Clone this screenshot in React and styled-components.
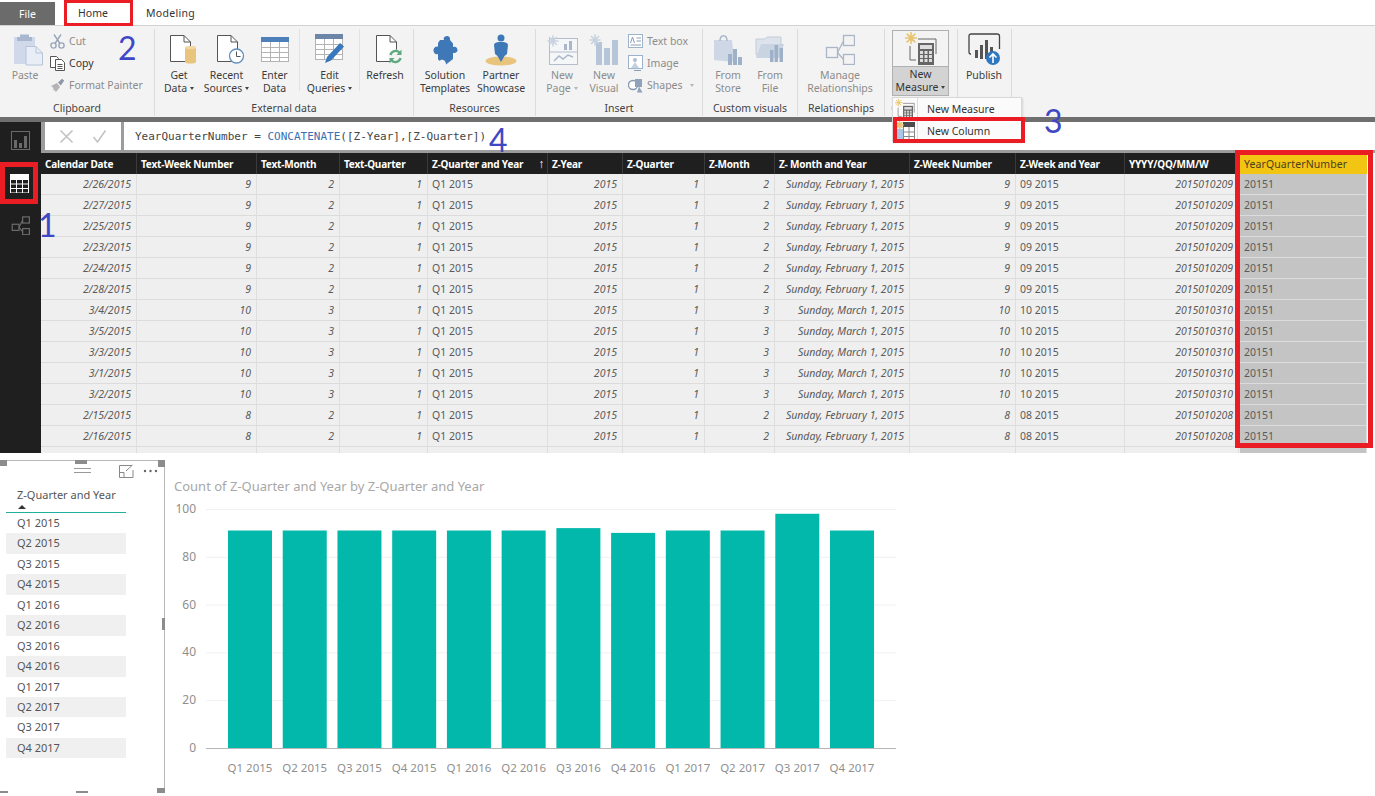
import React from "react";
import styled, { createGlobalStyle } from "styled-components";

const UI = `"Noto Sans", "Open Sans", sans-serif`;

const Global = createGlobalStyle`
  html, body { margin: 0; padding: 0; background: #fff; }
  body { font-family: ${UI}; width: 1375px; height: 796px; overflow: hidden; }
`;

const Page = styled.div`
  position: relative;
  width: 1375px;
  height: 796px;
  display: flex;
  flex-direction: column;
  overflow: hidden;
  background: #fff;
`;

/* ---------- tabs ---------- */
const TabBar = styled.div`
  height: 25px;
  display: flex;
  align-items: flex-end;
  border-bottom: 1px solid #d2d2d2;
  flex: none;
`;
const FileTab = styled.div`
  width: 55px;
  height: 23px;
  background: #6b6b6b;
  color: #fff;
  font-size: 10.5px;
  display: flex;
  align-items: center;
  justify-content: center;
`;
const HomeTab = styled.div`
  width: 69px;
  height: 26px;
  margin: 0 0 -1px 9px;
  box-sizing: border-box;
  border: 3px solid #ea1c24;
  color: #333;
  font-size: 10.5px;
  padding-left: 11px;
  display: flex;
  align-items: center;
`;
const PlainTab = styled.div`
  height: 25px;
  margin-left: 13px;
  color: #333;
  font-size: 10.5px;
  display: flex;
  align-items: center;
  letter-spacing: 0.3px;
`;

/* ---------- ribbon ---------- */
const Ribbon = styled.div`
  position: relative;
  height: 91px;
  flex: none;
  display: flex;
  background: #f3f3f3;
`;
const Group = styled.div`
  width: ${(p) => p.$w}px;
  box-sizing: border-box;
  border-right: 1px solid #dcdcdc;
  margin: 3px 0 1px;
  display: flex;
  flex-direction: column;
  overflow: hidden;
`;
const GroupBody = styled.div`
  height: 71px;
  flex: none;
  display: flex;
`;
const GroupTitle = styled.div`
  height: 16px;
  font-size: 10.5px;
  color: #444;
  text-align: center;
  line-height: 16px;
  white-space: nowrap;
`;
const Big = styled.div`
  width: ${(p) => p.$w}px;
  flex: none;
  display: flex;
  flex-direction: column;
  align-items: center;
  box-sizing: border-box;
  color: ${(p) => (p.$off ? "#8c8c8c" : "#3c3c3c")};
  border-right: ${(p) => (p.$sep ? "1px solid #e2e2e2" : "none")};
  margin-bottom: ${(p) => (p.$sep ? 9 : 0)}px;
`;
const IconSlot = styled.div`
  height: 33px;
  margin: 4px 0 3px ${(p) => p.$shift || 0}px;
  display: flex;
  align-items: center;
  justify-content: center;
  flex: none;
`;
const Label = styled.div`
  font-size: 10.5px;
  line-height: 13px;
  text-align: center;
  white-space: nowrap;
  letter-spacing: -0.05px;
`;
const Caret = styled.span`
  display: inline-block;
  width: 0;
  height: 0;
  margin-left: 3px;
  vertical-align: 2px;
  border-left: 2.5px solid transparent;
  border-right: 2.5px solid transparent;
  border-top: 3px solid ${(p) => (p.$off ? "#b5b5b5" : "#444")};
`;
const SmallCol = styled.div`
  display: flex;
  flex-direction: column;
  margin-left: ${(p) => p.$ml || 0}px;
  padding-top: 1px;
`;
const Small = styled.div`
  height: 22px;
  display: flex;
  align-items: center;
  gap: 4px;
  font-size: 10.5px;
  white-space: nowrap;
  color: ${(p) => (p.$off ? "#8c8c8c" : "#333")};
`;
const MeasureButton = styled.div`
  width: 57px;
  height: 66px;
  margin: 1px 0 0 7px;
  box-sizing: border-box;
  border: 1px solid #b0b0b0;
  display: flex;
  flex-direction: column;
  align-items: center;
  color: #333;
`;
const MeasureIcon = styled.div`
  height: 35px;
  flex: none;
  display: flex;
  align-items: center;
`;
const MeasureLabel = styled.div`
  flex: 1;
  width: 100%;
  background: #d3d3d3;
  border-top: 1px solid #b0b0b0;
  font-size: 10.5px;
  line-height: 13px;
  text-align: center;
  white-space: nowrap;
  padding-top: 1px;
`;

/* ---------- dropdown ---------- */
const Menu = styled.div`
  position: absolute;
  left: 892px;
  top: 71px;
  width: 130px;
  height: 45px;
  background: #fbfbfb;
  border: 1px solid #d8d8d8;
  box-sizing: border-box;
  z-index: 3;
  box-shadow: 1px 1px 2px rgba(0, 0, 0, 0.12);
`;
const MenuItem = styled.div`
  height: 22px;
  display: flex;
  align-items: center;
  font-size: 10.5px;
  color: #333;
`;
const MenuIcon = styled.div`
  width: 25px;
  height: 100%;
  flex: none;
  box-sizing: border-box;
  border-right: 1px solid #dedede;
  margin-right: 9px;
  display: flex;
  align-items: center;
  justify-content: center;
`;

/* ---------- main ---------- */
const GreyBar = styled.div`
  height: 5px;
  flex: none;
  background: #6f6f6f;
`;
const Main = styled.div`
  position: relative;
  height: 331px;
  flex: none;
  display: flex;
  overflow: hidden;
`;
const Side = styled.div`
  width: 41px;
  flex: none;
  background: #1f1f1f;
  display: flex;
  flex-direction: column;
  box-sizing: border-box;
`;
const SideButton = styled.div`
  width: ${(p) => (p.$active ? 38 : 41)}px;
  height: ${(p) => p.$h}px;
  margin-bottom: ${(p) => p.$mb || 0}px;
  flex: none;
  box-sizing: border-box;
  border: ${(p) => (p.$active ? "5px solid #ea1c24" : "none")};
  display: flex;
  align-items: center;
  justify-content: center;
`;
const Work = styled.div`
  flex: 1;
  min-width: 0;
  display: flex;
  flex-direction: column;
`;
const FormulaBar = styled.div`
  height: 31px;
  flex: none;
  box-sizing: border-box;
  background: #9c9c9c;
  padding: 0 0 3px 4px;
  display: flex;
  gap: 3px;
`;
const FormulaButtons = styled.div`
  width: 76px;
  background: #fff;
  display: flex;
  align-items: center;
  justify-content: space-around;
  padding: 0 5px;
  box-sizing: border-box;
`;
const FormulaInput = styled.div`
  flex: 1;
  background: #fff;
  display: flex;
  align-items: center;
  padding-left: 11px;
  font-family: "DejaVu Sans Mono", "Liberation Mono", monospace;
  font-size: 11px;
  color: #444;
  white-space: pre;
`;
const Fn = styled.span`
  color: #3b6fb0;
`;

const COLS = "96px 120px 83px 88px 120px 75px 82px 70px 135px 106px 109px 114px 1px 127px 1fr";
const Row = styled.div`
  display: grid;
  grid-template-columns: ${COLS};
  height: 21px;
  flex: none;
`;
const Head = styled.div`
  background: ${(p) => (p.$hl ? "#f2c512" : "#1f1f1f")};
  color: ${(p) => (p.$hl ? "#4c4020" : "#fff")};
  font-weight: ${(p) => (p.$hl ? 400 : 700)};
  font-size: ${(p) => (p.$hl ? 10.5 : 10)}px;
  letter-spacing: ${(p) => (p.$hl ? 0.1 : -0.2)}px;
  line-height: 22px;
  padding-left: 4px;
  white-space: nowrap;
  overflow: hidden;
  box-sizing: border-box;
  border-right: ${(p) => (p.$hl ? "none" : "1px solid #3a3a3a")};
  display: flex;
  justify-content: space-between;
`;
const SortArrow = styled.span`
  margin-right: 3px;
  font-weight: 400;
  font-size: 12px;
`;
const Cell = styled.div`
  background: ${(p) => (p.$hl ? "#c4c4c4" : "#efefef")};
  color: #5a5a5a;
  font-size: 10.5px;
  font-style: ${(p) => (p.$num ? "italic" : "normal")};
  text-align: ${(p) => (p.$num ? "right" : "left")};
  padding: 0 ${(p) => (p.$num ? 5 : 0)}px 0 ${(p) => (p.$num ? 0 : 4)}px;
  line-height: 20px;
  box-sizing: border-box;
  border-bottom: 1px solid #dcdcdc;
  border-right: 1px solid #dedede;
  white-space: nowrap;
  overflow: hidden;
`;
const Gap = styled.div`
  background: #efefef;
`;
const Blank = styled.div`
  background: #fff;
`;
const Red = styled.div`
  position: absolute;
  left: ${(p) => p.$x}px;
  top: ${(p) => p.$y}px;
  width: ${(p) => p.$w}px;
  height: ${(p) => p.$h}px;
  box-sizing: border-box;
  border: ${(p) => p.$b}px solid #ea1c24;
  pointer-events: none;
  z-index: 4;
`;
const Note = styled.div`
  position: absolute;
  left: ${(p) => p.$x}px;
  top: ${(p) => p.$y}px;
  color: #3f48c4;
  font-family: "Lato", "Noto Sans", sans-serif;
  font-size: 32px;
  line-height: 32px;
  z-index: 5;
`;

/* ---------- lower ---------- */
const Lower = styled.div`
  flex: 1;
  min-height: 0;
  display: flex;
`;
const Slicer = styled.div`
  position: relative;
  width: 165px;
  height: 333px;
  margin-top: 7px;
  box-sizing: border-box;
  border-top: 1px solid #b8b8b8;
  border-right: 1px solid #b8b8b8;
  flex: none;
  padding-left: 6px;
`;
const Handle = styled.div`
  position: absolute;
  background: #8c8c8c;
  left: ${(p) => p.$x}px;
  top: ${(p) => p.$y}px;
  width: ${(p) => p.$w}px;
  height: ${(p) => p.$h}px;
`;
const SlicerBar = styled.div`
  height: 18px;
  display: flex;
  align-items: center;
  padding-top: 2px;
  position: relative;
`;
const SlicerHeader = styled.div`
  width: 120px;
  height: 32px;
  box-sizing: border-box;
  border-bottom: 1px solid #1fb0a2;
  font-size: 11px;
  color: #555;
  padding: 7px 0 0 11px;
  line-height: 14px;
  position: relative;
`;
const SortMark = styled.span`
  position: absolute;
  left: 12px;
  top: 24px;
  width: 0;
  height: 0;
  border-left: 4px solid transparent;
  border-right: 4px solid transparent;
  border-bottom: 4px solid #333;
`;
const SlicerRow = styled.div`
  width: 120px;
  height: 20.45px;
  box-sizing: border-box;
  background: ${(p) => (p.$alt ? "#f0f0f0" : "#fff")};
  font-size: 11px;
  color: #555;
  line-height: 20.45px;
  padding-left: 11px;
`;
const ChartSvg = styled.svg`
  flex: 1;
  display: block;
  width: 1210px;
  height: 343px;
`;

/* ---------- icons ---------- */
const Svg = ({ w, h, children }) => (
  <svg width={w} height={h} viewBox={`0 0 ${w} ${h}`}>{children}</svg>
);
const Sheet = ({ x = 0, y = 0, w = 21, h = 27, c = "#555", f = "#fff" }) => (
  <g>
    <path d={`M${x + 0.5} ${y + 0.5}H${x + w - 7}L${x + w - 0.5} ${y + 7}V${y + h - 0.5}H${x + 0.5}Z`} fill={f} stroke={c} />
    <path d={`M${x + w - 7} ${y + 0.5}V${y + 7}H${x + w - 0.5}`} fill="none" stroke={c} />
  </g>
);
const Burst = ({ x, y, r = 5, c = "#e9c46f" }) => (
  <g stroke={c} strokeWidth="1.6" strokeLinecap="round">
    <path d={`M${x - r} ${y}H${x + r}M${x} ${y - r}V${y + r}M${x - r * 0.7} ${y - r * 0.7}L${x + r * 0.7} ${y + r * 0.7}M${x - r * 0.7} ${y + r * 0.7}L${x + r * 0.7} ${y - r * 0.7}`} />
  </g>
);
const PasteIcon = () => (
  <Svg w={30} h={33}>
    <rect x="1" y="4" width="21" height="27" fill="#cfd9e9" />
    <path d="M7 4V1.5H16V4H19V8H4V4Z" fill="#a8b7cf" />
    <path d="M13 13.5H23L29.5 20V32H13Z" fill="#e9eef6" stroke="#b7c4d8" />
    <path d="M23 13.5V20H29.5" fill="none" stroke="#b7c4d8" />
  </Svg>
);
const CutIcon = () => (
  <Svg w={15} h={15}>
    <g fill="none" stroke="#99a6ba" strokeWidth="1.4">
      <circle cx="3.5" cy="11.5" r="2.6" />
      <circle cx="11.5" cy="11.5" r="2.6" />
      <path d="M5 9.5L11 .5M10 9.5L4 .5" />
    </g>
  </Svg>
);
const CopyIcon = () => (
  <Svg w={15} h={15}>
    <g fill="#fff" stroke="#555">
      <path d="M.5 .5H6.5L8.5 2.5V11.5H.5Z" />
      <path d="M5.5 3.5H11.5L14.5 6.5V14.5H5.5Z" />
      <path d="M7.5 8.5H12.5M7.5 10.5H12.5M7.5 12.5H12.5" />
    </g>
  </Svg>
);
const BrushIcon = () => (
  <Svg w={15} h={15}>
    <path d="M1 8L7 5L10 9L6 14C5 13 4.5 12.5 4 11.5L3 12.5L3.5 10L1 8Z" fill="#b4b4b4" />
    <path d="M8 4.5L12 .8L14.2 2.6L10.8 7.5Z" fill="#8d97a8" />
  </Svg>
);
const GetDataIcon = () => (
  <Svg w={28} h={31}>
    <Sheet x={1} y={1} w={21} h={27} />
    <path d="M16 13.5C16 11.8 27 11.8 27 13.5V28C27 30 16 30 16 28Z" fill="#e8c47d" />
    <ellipse cx="21.5" cy="13.5" rx="5.5" ry="1.6" fill="#f1d9a6" />
  </Svg>
);
const RecentIcon = () => (
  <Svg w={29} h={31}>
    <Sheet x={1} y={1} w={21} h={27} />
    <circle cx="20.5" cy="22" r="7" fill="#fff" stroke="#5f8fc0" strokeWidth="1.3" />
    <path d="M20.5 17.5V22.5H24.5" fill="none" stroke="#555" />
  </Svg>
);
const GridIcon = ({ w = 28, h = 25, top = "#4d7fb8", line = "#b3b3b3" }) => (
  <Svg w={w} h={h}>
    <rect x=".5" y=".5" width={w - 1} height={h - 1} fill="#fff" stroke={line} />
    <rect x="0" y="0" width={w} height={h * 0.2} fill={top} />
    {[0.4, 0.6, 0.8].map((f) => (
      <path key={f} d={`M0 ${Math.round(h * f) + 0.5}H${w}`} stroke={line} />
    ))}
    {[0.33, 0.66].map((f) => (
      <path key={f} d={`M${Math.round(w * f) + 0.5} ${h * 0.2}V${h}`} stroke={line} />
    ))}
  </Svg>
);
const EditIcon = () => (
  <Svg w={30} h={31}>
    <rect x=".5" y=".5" width="27" height="25" fill="#fff" stroke="#b3b3b3" />
    <rect x="0" y="0" width="28" height="5" fill="#6d85a6" />
    <path d="M0 10.5H28M0 15.5H28M0 20.5H28M9.5 5V26M18.5 5V26" stroke="#b3b3b3" />
    <path d="M10 29L12 23L25 9L29 12.5L16 26.5Z" fill="#3a78bd" />
  </Svg>
);
const RefreshIcon = () => (
  <Svg w={28} h={31}>
    <Sheet x={1} y={1} w={21} h={27} />
    <circle cx="20.5" cy="22.5" r="7" fill="#f3f3f3" />
    <g fill="none" stroke="#5ea97e" strokeWidth="2.4">
      <path d="M15.5 21A5.3 5.3 0 0 1 24.5 18.6" />
      <path d="M25.5 24A5.3 5.3 0 0 1 16.5 26.4" />
    </g>
    <path d="M26.5 15.5V21H21.5ZM14.5 29.5V24H19.5Z" fill="#5ea97e" />
  </Svg>
);
const PuzzleIcon = () => (
  <Svg w={27} h={30}>
    <path d="M8 5H12C10 1 18 -1 18 4V5L21 8.5V12C26 10 28 19 21 18V24L14 29.5C14 24 8 24 8 26L6 24.5V19C1 21 -1 11 6 11.5V8Z" fill="#3f78b6" />
  </Svg>
);
const PartnerIcon = () => (
  <Svg w={32} h={32}>
    <ellipse cx="16" cy="27" rx="15.5" ry="4.5" fill="#e8c47d" />
    <circle cx="16" cy="4" r="3.5" fill="#3f78b6" />
    <path d="M9 11C9 8.5 13 8 16 8S23 8.5 23 11L22 20L19.5 22L16 28L12.5 22L10 20Z" fill="#3f78b6" />
  </Svg>
);
const NewPageIcon = () => (
  <Svg w={31} h={30}>
    <rect x="2.5" y="3.5" width="28" height="26" fill="#f5f6f8" stroke="#b3bdcc" />
    <path d="M3 17H30" stroke="#b3bdcc" />
    <rect x="17" y="9" width="3" height="6" fill="#aab7ca" />
    <rect x="22" y="6" width="3" height="9" fill="#aab7ca" />
    <path d="M7 26L12 21L16 24L21 20L26 22" fill="none" stroke="#aab7ca" strokeWidth="1.5" />
    <Burst x={6} y={6} r={5} c="#c9d2df" />
  </Svg>
);
const NewVisualIcon = () => (
  <Svg w={30} h={31}>
    <rect x="7" y="8" width="6" height="23" fill="#b7c5d9" />
    <rect x="15" y="14" width="6" height="17" fill="#b7c5d9" />
    <rect x="23" y="6" width="6" height="25" fill="#b7c5d9" />
    <Burst x={6} y={6} r={5} c="#c9d2df" />
  </Svg>
);
const TextBoxIcon = () => (
  <Svg w={15} h={14}>
    <rect x=".5" y=".5" width="14" height="13" fill="#fff" stroke="#9fb2cb" />
    <path d="M2.5 9L4.5 3L6.5 9M8.5 4H13M8.5 7H13M2.5 11H13" fill="none" stroke="#8a9cb5" />
  </Svg>
);
const ImageIcon = () => (
  <Svg w={15} h={16}>
    <rect x=".5" y=".5" width="14" height="13" fill="#fff" stroke="#9fb2cb" />
    <circle cx="7" cy="5" r="2" fill="#aebdd1" />
    <path d="M3 13L7 7L11 13Z" fill="#c6d1e0" />
    <path d="M6 15.5H13" stroke="#8a9cb5" />
  </Svg>
);
const ShapesIcon = () => (
  <Svg w={15} h={15}>
    <circle cx="5" cy="7" r="4.5" fill="#fff" stroke="#8297b3" strokeWidth="1.3" />
    <rect x="7" y="1" width="7" height="8" fill="#8ea2bc" />
    <path d="M9 14.5L11 8.5L14.5 14.5Z" fill="#8ea2bc" />
  </Svg>
);
const StoreIcon = () => (
  <Svg w={30} h={33}>
    <path d="M1 7H19L21 29L1 27Z" fill="#cdd7e5" />
    <path d="M7 8C7 1 14 1 14 8" fill="none" stroke="#aab8cb" strokeWidth="1.5" />
    <rect x="15" y="21" width="4" height="11" fill="#9fb1c9" />
    <rect x="20" y="16" width="4" height="16" fill="#9fb1c9" />
    <rect x="25" y="24" width="4" height="8" fill="#9fb1c9" />
  </Svg>
);
const FolderIcon = () => (
  <Svg w={30} h={27}>
    <path d="M1 3H10L12 1H26V19H1Z" fill="#dde3ec" stroke="#c2ccda" />
    <path d="M1 22L6 8H29L25 22Z" fill="#c9d4e3" />
    <rect x="15" y="14" width="3.5" height="12" fill="#9fb1c9" />
    <rect x="19.5" y="9" width="3.5" height="17" fill="#9fb1c9" />
    <rect x="24.5" y="12" width="3.5" height="14" fill="#9fb1c9" />
  </Svg>
);
const RelIcon = ({ c = "#aab6c8", w = 30, h = 31 }) => (
  <svg width={w} height={h} viewBox="0 0 30 31">
    <g fill="none" stroke={c} strokeWidth={w < 25 ? 2 : 1.3}>
      <rect x="18.5" y="1.5" width="11" height="10" />
      <rect x="1.5" y="13.5" width="11" height="10" />
      <rect x="18.5" y="20.5" width="11" height="10" />
      <path d="M12.5 18.5L18.5 7M12.5 18.5L18.5 25.5" />
    </g>
  </svg>
);
const MeasureGlyph = ({ s = 1 }) => (
  <svg width={32 * s} height={33 * s} viewBox="0 0 32 33">
    <Burst x={6} y={6} r={5.5} />
    <path d="M5 14V28H11M13 7H31V22" fill="none" stroke="#666" />
    <rect x="13" y="11" width="16" height="22" fill="#666" />
    <rect x="15" y="13" width="12" height="4" fill="#ddd" />
    {[19, 23, 27].map((y) =>
      [15, 19.5, 24].map((x) => <rect key={x + "-" + y} x={x} y={y} width="3" height="3" fill="#ddd" />)
    )}
  </svg>
);
const ColumnGlyph = () => (
  <svg width={20} height={20} viewBox="0 0 20 20">
    <rect x="1" y="8" width="7" height="12" fill="#a9c6e4" />
    <rect x="8.5" y="1.5" width="11" height="18" fill="#fff" stroke="#888" />
    <rect x="8" y="1" width="12" height="5" fill="#4d4d4d" />
    <path d="M8 11H20M8 15.5H20M14 6V20" stroke="#888" />
    <Burst x={4.5} y={4} r={3.6} />
  </svg>
);
const PublishIcon = () => (
  <Svg w={33} h={33}>
    <path d="M3 21H2.5C1.5 21 1 20 1 19V3C1 1.5 2 1 3 1H29C30.5 1 31.5 2 31.5 3V16" fill="none" stroke="#444" strokeWidth="1.3" />
    <rect x="7" y="17" width="3" height="8" fill="#555" />
    <rect x="12" y="12" width="3" height="14" fill="#555" />
    <rect x="17" y="7" width="3" height="19" fill="#555" />
    <rect x="22" y="14" width="3" height="6" fill="#555" />
    <circle cx="25" cy="25" r="7" fill="#2e78c0" />
    <path d="M25 30V21M21.5 24.5L25 21L28.5 24.5" fill="none" stroke="#fff" strokeWidth="1.6" />
  </Svg>
);
const ReportIcon = () => (
  <Svg w={19} h={19}>
    <rect x=".5" y=".5" width="18" height="18" fill="none" stroke="#6a6a6a" />
    <rect x="3" y="9" width="3" height="8" fill="#6a6a6a" />
    <rect x="8" y="12" width="3" height="5" fill="#6a6a6a" />
    <rect x="13" y="5" width="3" height="12" fill="#6a6a6a" />
  </Svg>
);
const DataIcon = () => (
  <Svg w={19} h={19}>
    <rect x="0" y="0" width="19" height="19" fill="#fff" />
    <g fill="#1f1f1f">
      {[6, 10.5, 15].map((y) =>
        [1, 7, 13].map((x) => <rect key={x + "-" + y} x={x} y={y} width="5" height="3.5" />)
      )}
    </g>
  </Svg>
);
const CrossIcon = () => (
  <Svg w={15} h={15}>
    <path d="M1.5 1.5L13.5 13.5M13.5 1.5L1.5 13.5" stroke="#c2c2c2" strokeWidth="1.6" />
  </Svg>
);
const CheckIcon = () => (
  <Svg w={15} h={15}>
    <path d="M1.5 8L5.5 13L13.5 1.5" fill="none" stroke="#c2c2c2" strokeWidth="1.6" />
  </Svg>
);
const SlicerTools = styled.svg`
  position: absolute;
  right: 6px;
  top: 3px;
`;

/* ---------- data ---------- */
const feb = "Sunday, February 1, 2015";
const mar = "Sunday, March 1, 2015";
const rows = [
  ["2/26/2015", 9, 2, feb, "09 2015", "2015010209"],
  ["2/27/2015", 9, 2, feb, "09 2015", "2015010209"],
  ["2/25/2015", 9, 2, feb, "09 2015", "2015010209"],
  ["2/23/2015", 9, 2, feb, "09 2015", "2015010209"],
  ["2/24/2015", 9, 2, feb, "09 2015", "2015010209"],
  ["2/28/2015", 9, 2, feb, "09 2015", "2015010209"],
  ["3/4/2015", 10, 3, mar, "10 2015", "2015010310"],
  ["3/5/2015", 10, 3, mar, "10 2015", "2015010310"],
  ["3/3/2015", 10, 3, mar, "10 2015", "2015010310"],
  ["3/1/2015", 10, 3, mar, "10 2015", "2015010310"],
  ["3/2/2015", 10, 3, mar, "10 2015", "2015010310"],
  ["2/15/2015", 8, 2, feb, "08 2015", "2015010208"],
  ["2/16/2015", 8, 2, feb, "08 2015", "2015010208"],
  ["2/17/2015", 8, 2, feb, "08 2015", "2015010208"],
];
const heads = [
  "Calendar Date", "Text-Week Number", "Text-Month", "Text-Quarter", "Z-Quarter and Year",
  "Z-Year", "Z-Quarter", "Z-Month", "Z- Month and Year", "Z-Week Number", "Z-Week and Year", "YYYY/QQ/MM/W",
];
const quarters = ["Q1 2015","Q2 2015","Q3 2015","Q4 2015","Q1 2016","Q2 2016","Q3 2016","Q4 2016","Q1 2017","Q2 2017","Q3 2017","Q4 2017"];
const counts = [91, 91, 91, 91, 91, 91, 92, 90, 91, 91, 98, 91];

const Chart = () => (
  <ChartSvg viewBox="165 453 1210 343">
    <text x="174" y="491" fontSize="13" fill="#a8a8a8" fontFamily={UI}>Count of Z-Quarter and Year by Z-Quarter and Year</text>
    {[100, 80, 60, 40, 20, 0].map((v) => {
      const y = 748 - v * 2.39;
      return (
        <g key={v}>
          <path d={`M206 ${y + 0.5}H896`} stroke={v === 0 ? "#b5b5b5" : "#f1f1f1"} />
          <text x="196" y={y + 4} textAnchor="end" fontSize="12" fill="#8f8f8f" fontFamily={UI}>{v}</text>
        </g>
      );
    })}
    {counts.map((c, i) => (
      <rect key={i} x={228 + i * 54.73} y={748 - c * 2.39} width="44" height={c * 2.39} fill="#01b8aa" />
    ))}
    {quarters.map((q, i) => (
      <text key={i} x={250 + i * 54.73} y="772" textAnchor="middle" fontSize="11.5" fill="#8f8f8f" fontFamily={UI}>{q}</text>
    ))}
  </ChartSvg>
);

export default function App() {
  return (
    <Page>
      <Global />
      <TabBar>
        <FileTab>File</FileTab>
        <HomeTab>Home</HomeTab>
        <PlainTab>Modeling</PlainTab>
      </TabBar>

      <Ribbon>
        <Group $w={155}>
          <GroupBody>
            <Big $w={50} $off><IconSlot $shift={5}><PasteIcon /></IconSlot><Label>Paste</Label></Big>
            <SmallCol>
              <Small $off><CutIcon />Cut</Small>
              <Small><CopyIcon />Copy</Small>
              <Small $off><BrushIcon />Format Painter</Small>
            </SmallCol>
          </GroupBody>
          <GroupTitle>Clipboard</GroupTitle>
        </Group>
        <Group $w={259}>
          <GroupBody>
            <Big $w={48}><IconSlot $shift={8}><GetDataIcon /></IconSlot><Label>Get<br />Data<Caret /></Label></Big>
            <Big $w={47}><IconSlot $shift={7}><RecentIcon /></IconSlot><Label>Recent<br />Sources<Caret /></Label></Big>
            <Big $w={50} $sep><IconSlot><GridIcon /></IconSlot><Label>Enter<br />Data</Label></Big>
            <Big $w={60} $sep><IconSlot><EditIcon /></IconSlot><Label>Edit<br />Queries<Caret /></Label></Big>
            <Big $w={50}><IconSlot $shift={7}><RefreshIcon /></IconSlot><Label>Refresh</Label></Big>
          </GroupBody>
          <GroupTitle>External data</GroupTitle>
        </Group>
        <Group $w={122}>
          <GroupBody>
            <Big $w={62}><IconSlot><PuzzleIcon /></IconSlot><Label>Solution<br />Templates</Label></Big>
            <Big $w={50}><IconSlot><PartnerIcon /></IconSlot><Label>Partner<br />Showcase</Label></Big>
          </GroupBody>
          <GroupTitle>Resources</GroupTitle>
        </Group>
        <Group $w={167}>
          <GroupBody>
            <Big $w={52} $off><IconSlot><NewPageIcon /></IconSlot><Label>New<br />Page<Caret $off /></Label></Big>
            <Big $w={32} $off><IconSlot><NewVisualIcon /></IconSlot><Label>New<br />Visual</Label></Big>
            <SmallCol $ml={8}>
              <Small $off><TextBoxIcon />Text box</Small>
              <Small $off><ImageIcon />Image</Small>
              <Small $off><ShapesIcon />Shapes<Caret $off /></Small>
            </SmallCol>
          </GroupBody>
          <GroupTitle>Insert</GroupTitle>
        </Group>
        <Group $w={95}>
          <GroupBody>
            <Big $w={50} $off><IconSlot><StoreIcon /></IconSlot><Label>From<br />Store</Label></Big>
            <Big $w={34} $off><IconSlot><FolderIcon /></IconSlot><Label>From<br />File</Label></Big>
          </GroupBody>
          <GroupTitle>Custom visuals</GroupTitle>
        </Group>
        <Group $w={87}>
          <GroupBody>
            <Big $w={84} $off><IconSlot><RelIcon /></IconSlot><Label>Manage<br />Relationships</Label></Big>
          </GroupBody>
          <GroupTitle>Relationships</GroupTitle>
        </Group>
        <Group $w={73}>
          <GroupBody>
            <MeasureButton>
              <MeasureIcon><MeasureGlyph /></MeasureIcon>
              <MeasureLabel>New<br />Measure<Caret /></MeasureLabel>
            </MeasureButton>
          </GroupBody>
          <GroupTitle>Calculations</GroupTitle>
        </Group>
        <Group $w={54}>
          <GroupBody>
            <Big $w={52}><IconSlot><PublishIcon /></IconSlot><Label>Publish</Label></Big>
          </GroupBody>
          <GroupTitle />
        </Group>
        <Menu>
          <MenuItem><MenuIcon><MeasureGlyph s={0.62} /></MenuIcon>New Measure</MenuItem>
          <MenuItem><MenuIcon><ColumnGlyph /></MenuIcon>New Column</MenuItem>
        </Menu>
        <Red $x={893} $y={91} $w={132} $h={26} $b={4} />
      </Ribbon>
      <GreyBar />

      <Main>
        <Side>
          <SideButton $h={36} $mb={4}><ReportIcon /></SideButton>
          <SideButton $h={42} $active><DataIcon /></SideButton>
          <SideButton $h={42}><RelIcon c="#6a6a6a" w={19} h={19} /></SideButton>
        </Side>
        <Work>
          <FormulaBar>
            <FormulaButtons><CrossIcon /><CheckIcon /></FormulaButtons>
            <FormulaInput>YearQuarterNumber = <Fn>CONCATENATE</Fn>([Z-Year],[Z-Quarter])</FormulaInput>
          </FormulaBar>
          <Row>
            {heads.map((h) => (
              <Head key={h}>
                {h}
                {h === "Z-Quarter and Year" ? <SortArrow>↑</SortArrow> : null}
              </Head>
            ))}
            <Head />
            <Head $hl>YearQuarterNumber</Head>
            <Blank />
          </Row>
          {rows.map((r) => (
            <Row key={r[0]}>
              <Cell $num>{r[0]}</Cell>
              <Cell $num>{r[1]}</Cell>
              <Cell $num>{r[2]}</Cell>
              <Cell $num>1</Cell>
              <Cell>Q1 2015</Cell>
              <Cell $num>2015</Cell>
              <Cell $num>1</Cell>
              <Cell $num>{r[2]}</Cell>
              <Cell $num>{r[3]}</Cell>
              <Cell $num>{r[1]}</Cell>
              <Cell>{r[4]}</Cell>
              <Cell $num>{r[5]}</Cell>
              <Gap />
              <Cell $hl>20151</Cell>
              <Blank />
            </Row>
          ))}
        </Work>
        <Red $x={1235} $y={28} $w={138} $h={298} $b={5} />
      </Main>

      <Lower>
        <Slicer>
          <Handle $x={0} $y={-1} $w={7} $h={6} />
          <Handle $x={75} $y={-1} $w={12} $h={4} />
          <Handle $x={158} $y={-1} $w={7} $h={7} />
          <Handle $x={162} $y={157} $w={3} $h={12} />
          <Handle $x={0} $y={330} $w={8} $h={2} />
          <Handle $x={76} $y={330} $w={12} $h={2} />
          <Handle $x={157} $y={327} $w={8} $h={5} />
          <SlicerBar>
            <SlicerTools width="84" height="14" viewBox="0 0 84 14">
              <path d="M0 4.5H17M0 8.5H17" stroke="#999" fill="none" />
              <path d="M58 1.5H45.5V13.5H59V6M50 13V8.5H45.5M52 7L58.5 1" stroke="#888" fill="none" />
              <circle cx="71" cy="7" r="1.2" fill="#666" />
              <circle cx="76.5" cy="7" r="1.2" fill="#666" />
              <circle cx="82" cy="7" r="1.2" fill="#666" />
            </SlicerTools>
          </SlicerBar>
          <SlicerHeader>Z-Quarter and Year<SortMark /></SlicerHeader>
          {quarters.map((q, i) => (
            <SlicerRow key={q} $alt={i % 2 === 1}>{q}</SlicerRow>
          ))}
        </Slicer>
        <Chart />
      </Lower>

      <Note $x={118} $y={32}>2</Note>
      <Note $x={1044} $y={105}>3</Note>
      <Note $x={489} $y={124}>4</Note>
      <Note $x={38} $y={209}>1</Note>
    </Page>
  );
}
